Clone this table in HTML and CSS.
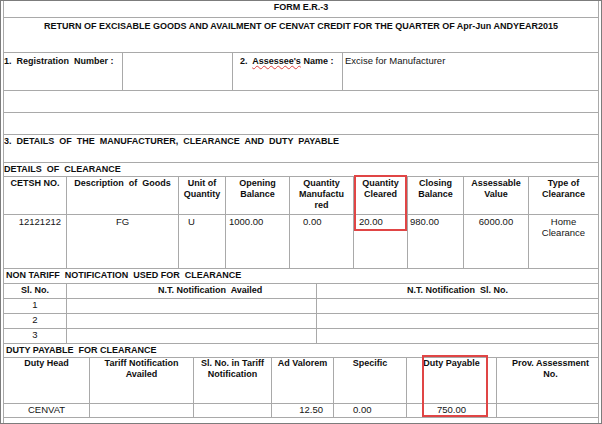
FILE: index.html
```html
<!DOCTYPE html>
<html>
<head>
<meta charset="utf-8">
<link rel="stylesheet" href="styles.css">
</head>
<body>
<div class="frame">
  <div class="sheet">
    <div class="row r-form"><div class="c ctr b">FORM E.R.-3</div></div>
    <div class="row r-title"><div class="c ctr b">RETURN OF EXCISABLE GOODS AND AVAILMENT OF CENVAT CREDIT FOR THE QUARTER OF Apr-Jun ANDYEAR2015</div></div>
    <div class="row r-reg">
      <div class="c b pre reg1">1.  Registration  Number :</div>
      <div class="c"></div>
      <div class="c b pre reg2">2.  <span class="spell">Assessee's</span> Name :</div>
      <div class="c reg4">Excise for Manufacturer</div>
    </div>
    <div class="row r-empty"><div class="c"></div></div>
    <div class="row r-empty"><div class="c"></div></div>
    <div class="row r-sec"><div class="c b pre sec">3.  DETAILS  OF  THE  MANUFACTURER,  CLEARANCE  AND  DUTY  PAYABLE</div></div>
    <div class="row r-sub"><div class="c b pre sub0">DETAILS  OF  CLEARANCE</div></div>

    <div class="row grid-clr r-clr-h">
      <div class="c b ctr h1">CETSH NO.</div>
      <div class="c b ctr pre">Description  of  Goods</div>
      <div class="c b ctr">Unit of Quantity</div>
      <div class="c b ctr">Opening Balance</div>
      <div class="c b ctr">Quantity Manufactu red</div>
      <div class="c b ctr">Quantity Cleared</div>
      <div class="c b ctr">Closing Balance</div>
      <div class="c b ctr">Assessable Value</div>
      <div class="c b ctr">Type of Clearance</div>
    </div>
    <div class="row grid-clr r-clr-d">
      <div class="c rt pr5">12121212</div>
      <div class="c ctr">FG</div>
      <div class="c pl9">U</div>
      <div class="c pl3">1000.00</div>
      <div class="c pl13">0.00</div>
      <div class="c pl5">20.00</div>
      <div class="c pl2">980.00</div>
      <div class="c ctr">6000.00</div>
      <div class="c ctr">Home Clearance</div>
    </div>

    <div class="row r-t15"><div class="c b pre sub">NON TARIFF  NOTIFICATION  USED FOR  CLEARANCE</div></div>
    <div class="row grid-nt r-t15">
      <div class="c b ctr">Sl. No.</div>
      <div class="c b pre ntav">N.T. Notification  Availed</div>
      <div class="c b ctr pre">N.T. Notification  Sl. No.</div>
    </div>
    <div class="row grid-nt r-t15"><div class="c ctr">1</div><div class="c"></div><div class="c"></div></div>
    <div class="row grid-nt r-t15"><div class="c ctr">2</div><div class="c"></div><div class="c"></div></div>
    <div class="row grid-nt r-t15"><div class="c ctr">3</div><div class="c"></div><div class="c"></div></div>
    <div class="row r-sub"><div class="c b pre sub">DUTY PAYABLE  FOR CLEARANCE</div></div>

    <div class="row grid-duty r-duty-h">
      <div class="c b ctr">Duty Head</div>
      <div class="c b ctr">Tariff Notification Availed</div>
      <div class="c b ctr">Sl. No. in Tariff Notification</div>
      <div class="c b ctr">Ad Valorem</div>
      <div class="c b ctr">Specific</div>
      <div class="c b ctr">Duty Payable</div>
      <div class="c b ctr prov">Prov. Assessment No.</div>
    </div>
    <div class="row grid-duty r-duty-d">
      <div class="c ctr">CENVAT</div>
      <div class="c"></div>
      <div class="c"></div>
      <div class="c rt pr10">12.50</div>
      <div class="c pl19">0.00</div>
      <div class="c ctr">750.00</div>
      <div class="c"></div>
    </div>
  </div>
  <div class="hl hl-qty"></div>
  <div class="hl hl-duty"></div>
</div>
</body>
</html>
```

FILE: styles.css
```css
html, body {
  margin: 0;
  padding: 0;
  background: #ffffff;
}
body {
  font-family: "Liberation Sans", Arial, sans-serif;
  font-size: 9.5px;
  color: #141414;
}
.frame {
  position: relative;
  width: 602px;
  height: 424px;
  box-sizing: border-box;
  border: 1px solid #7c7c7c;
  overflow: hidden;
}
.sheet {
  margin: 0 2px;
  height: 422px;
  box-sizing: border-box;
  border-left: 1px solid #a9a9a9;
  border-right: 1px solid #a9a9a9;
}
.row {
  display: grid;
  grid-template-columns: 1fr;
  box-sizing: border-box;
  border-bottom: 1px solid #a9a9a9;
}
.c {
  box-sizing: border-box;
  border-right: 1px solid #a9a9a9;
  line-height: 10px;
  overflow: hidden;
}
.c:last-child { border-right: none; }
.b { font-weight: bold; font-size: 9px; color: #0e0e0e; }
.ctr { text-align: center; }
.rt { text-align: right; }
.pre { white-space: pre; }

.r-form { height: 17px; }
.r-form .c { padding-top: 1px; }
.r-title { height: 35px; }
.r-title .c { padding-top: 3px; }
.r-reg {
  height: 38px;
  grid-template-columns: 119px 110px 110px 1fr;
}
.r-reg .c { padding-top: 3px; }
.reg1 { padding-left: 0; }
.reg2 { padding-left: 7px; }
.reg4 { padding-left: 2px; }
.spell {
  text-decoration: underline wavy #e04040;
  text-decoration-thickness: 1px;
  text-underline-offset: 1px;
}
.r-empty { height: 22px; }
.r-sec { height: 28px; }
.r-sec .c { padding-top: 1px; }
.r-sub { height: 14px; }
.r-sub .c { padding-top: 1px; }
.sub0 { padding-left: 0; }
.sub { padding-left: 2px; }

.grid-clr {
  grid-template-columns: 63px 112px 47px 64px 64px 54px 56px 65px 1fr;
}
.r-clr-h { height: 38px; }
.r-clr-h .c { line-height: 11px; padding: 1px 1px 0; }
.r-clr-d { height: 54px; }
.r-clr-d .c { line-height: 11px; padding-top: 1px; }

.r-t15 { height: 15px; }
.r-t15 .c { padding-top: 1px; }
.grid-nt { grid-template-columns: 63px 250px 1fr; }
.ntav { padding-left: 91px; }

.grid-duty {
  grid-template-columns: 86px 104px 78px 62px 73px 90px 1fr;
}
.r-duty-h { height: 46px; }
.r-duty-h .c { line-height: 11px; padding: 0 2px; }
.r-duty-h .prov { padding: 0 8px 0 14px; }
.r-duty-d { height: 14px; }
.r-duty-d .c { padding-top: 1px; }

.pr5 { padding-right: 5px; }
.pr10 { padding-right: 10px; }
.pl2 { padding-left: 2px; }
.pl3 { padding-left: 3px; }
.pl5 { padding-left: 5px; }
.pl9 { padding-left: 9px; }
.pl13 { padding-left: 13px; }
.pl19 { padding-left: 19px; }

.hl {
  position: absolute;
  box-sizing: border-box;
  border: 2px solid #e04545;
}
.hl-qty {
  left: 353px;
  top: 174px;
  width: 53px;
  height: 56px;
}
.hl-duty {
  left: 421px;
  top: 354px;
  width: 66px;
  height: 62px;
}
```
